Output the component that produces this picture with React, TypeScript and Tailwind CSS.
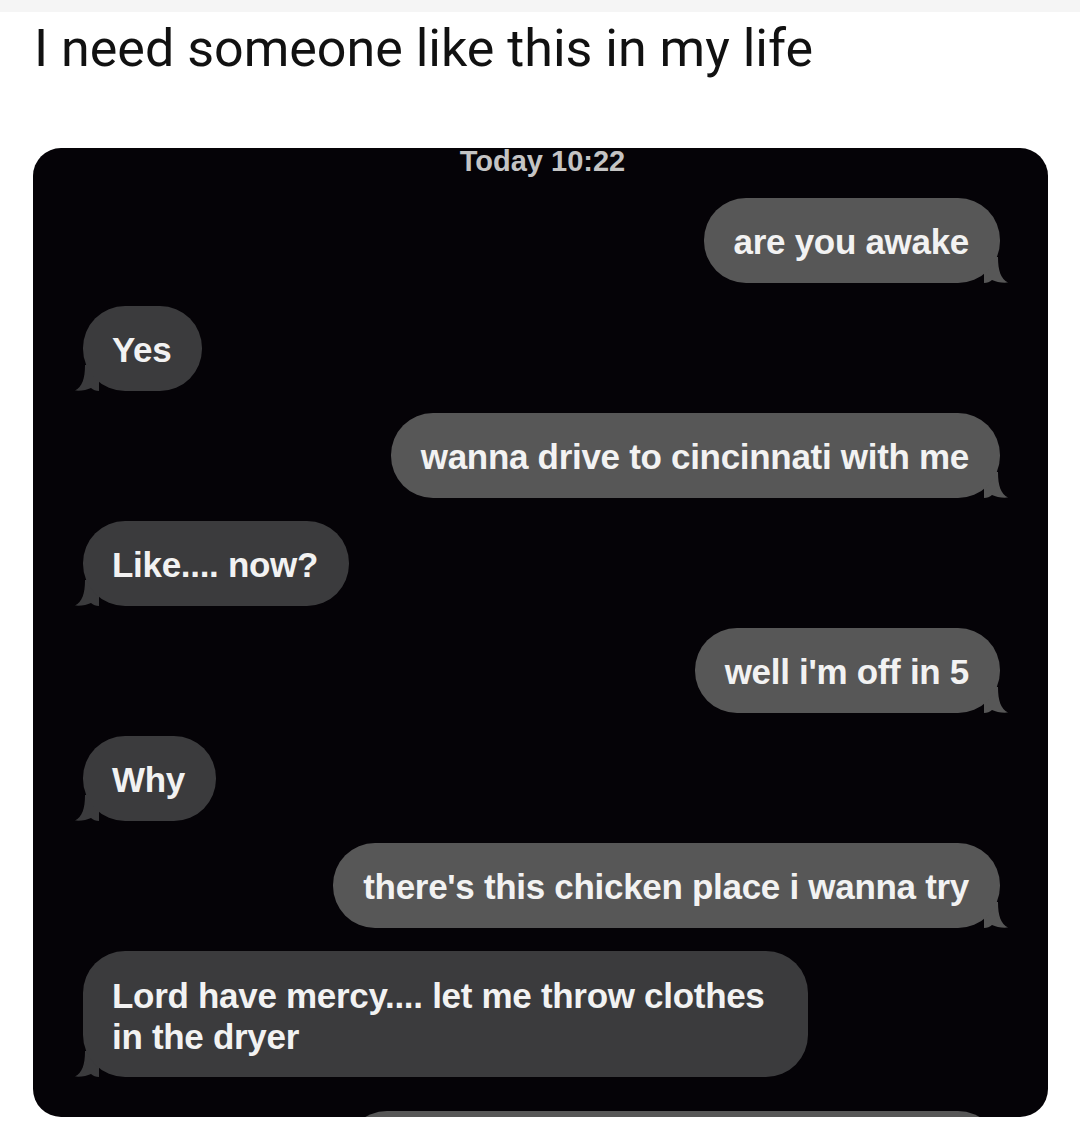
import React from "react";

const chatFont = { fontFamily: '"Liberation Sans", Arial, sans-serif' };

function Tail({ side, color }: { side: "left" | "right"; color: string }) {
  return (
    <svg
      width="24"
      height="26"
      viewBox="0 0 24 26"
      className={
        side === "right"
          ? "absolute right-[-8px] bottom-0"
          : "absolute left-[-8px] bottom-0 scale-x-[-1]"
      }
    >
      <path
        d="M0 0 L14 0 C14 14 17 22 24 25.5 C18 26 12 25 8 23 C6 25 3 26 0 26 Z"
        fill={color}
      />
    </svg>
  );
}

function Sent({ text }: { text: string }) {
  return (
    <div className="self-end relative">
      <div className="relative z-10 h-[85px] rounded-[42px] bg-[#575757] pl-[30px] pr-[31px] pt-[4px] flex items-center text-[35px] font-bold tracking-[-0.3px] text-[#f2f2f2] whitespace-nowrap">
        {text}
      </div>
      <Tail side="right" color="#575757" />
    </div>
  );
}

function Received({ children, tall }: { children: React.ReactNode; tall?: boolean }) {
  return (
    <div className="self-start relative">
      <div
        className={
          "relative z-10 rounded-[42px] bg-[#3b3b3d] pl-[29px] pr-[31px] pt-[4px] flex items-center text-[35px] font-bold tracking-[-0.3px] text-[#f2f2f2] whitespace-nowrap " +
          (tall ? "h-[126px] w-[725px] leading-[41px]" : "h-[85px]")
        }
      >
        <div>{children}</div>
      </div>
      <Tail side="left" color="#3b3b3d" />
    </div>
  );
}

export default function App() {
  return (
    <div className="w-[1080px] h-[1131px] bg-white overflow-hidden">
      <div className="h-[12px] bg-[#f5f5f5]" />
      <div
        className="pl-[34px] pt-[6px] text-[52px] leading-[62px] text-[#111111]"
        style={{ fontFamily: 'Roboto, "Liberation Sans", sans-serif' }}
      >
        I need someone like this in my life
      </div>
      <div
        className="mt-[68px] ml-[33px] w-[1015px] h-[969px] rounded-[28px] bg-[#050307] overflow-hidden flex flex-col pl-[50px] pr-[48px]"
        style={chatFont}
      >
        <div className="self-center -mt-[1px] text-[29px] leading-[29px] font-bold text-[#c4c4c4] pl-[2px]">
          Today 10:22
        </div>
        <div className="mt-[22px] flex flex-col gap-[22.5px]">
          <Sent text="are you awake" />
          <Received>Yes</Received>
          <Sent text="wanna drive to cincinnati with me" />
          <Received>Like.... now?</Received>
          <Sent text="well i'm off in 5" />
          <Received>Why</Received>
          <Sent text="there's this chicken place i wanna try" />
          <Received tall>
            Lord have mercy.... let me throw clothes
            <br />
            in the dryer
          </Received>
          <div className="self-end mt-[12px] w-[655px] h-[85px] rounded-[42px] bg-[#575757]" />
        </div>
      </div>
    </div>
  );
}
